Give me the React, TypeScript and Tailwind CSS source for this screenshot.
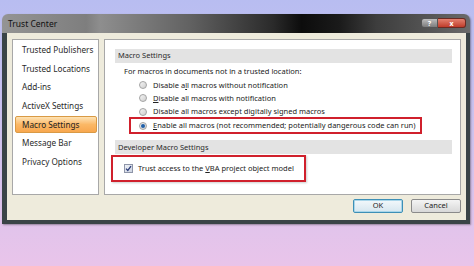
import React from 'react';

const navItems = [
  'Trusted Publishers',
  'Trusted Locations',
  'Add-ins',
  'ActiveX Settings',
  'Macro Settings',
  'Message Bar',
  'Privacy Options',
];

const Radio = ({ checked = false }: { checked?: boolean }) => (
  <span className="w-[8px] h-[8px] rounded-full border border-[#a3a3a3] bg-gradient-to-br from-[#f4f4f4] to-[#cfcfcf] flex items-center justify-center shrink-0">
    {checked && <span className="w-[4px] h-[4px] rounded-full bg-[#1f5fa8]" />}
  </span>
);

const SectionHeader = ({ title }: { title: string }) => (
  <div className="h-[13.5px] bg-[#e3e3e3] flex items-center pl-[3px] text-[7.5px] text-[#2a2a2a]">
    {title}
  </div>
);

export default function App() {
  return (
    <div
      className="w-[474px] h-[266px] overflow-hidden bg-gradient-to-b from-[#b8bdf1] via-[#cfc3ee] to-[#e9c4ea] pt-[14px] pl-[2px]"
      style={{ fontFamily: '"Noto Sans", "Open Sans", sans-serif' }}
    >
      <div className="w-[468px] h-[210px] flex flex-col rounded-t-[6px] overflow-hidden shadow-[1px_1px_2px_rgba(0,0,0,0.35)]">
        {/* title bar */}
        <div className="h-[19px] shrink-0 flex items-start bg-[linear-gradient(90deg,#949494_0%,#7e7e7e_18%,#8e8e8e_21%,#626262_40%,#2a2a2a_58%,#0c0c0c_64%,#1a1a1a_72%,#3d3d3d_80%,#575757_92%,#6a6a6a_100%)]">
          <span className="pl-[6px] pt-[4px] text-[8.5px] leading-[11px] text-[#111]">Trust Center</span>
          <div className="ml-auto mr-[4px] mt-[4px] flex">
            <div className="w-[17px] h-[10px] rounded-l-[3px] border border-[#555] bg-gradient-to-b from-[#bdbdbd] to-[#7d7d7d] flex items-center justify-center text-[7px] leading-none font-bold text-white">
              ?
            </div>
            <div className="w-[28px] h-[10px] rounded-r-[3px] border border-l-0 border-[#6b2a22] bg-gradient-to-b from-[#e3806f] to-[#bf3b2a] flex items-center justify-center text-[7px] leading-none font-bold text-white">
              x
            </div>
          </div>
        </div>

        {/* client area */}
        <div className="flex-1 flex flex-col border-l-[5px] border-r-[4px] border-b-[4px] border-[#3a4447] bg-[#eeebdc] px-[5px] pt-[6px]">
          <div className="flex gap-[5px] h-[156px]">
            {/* nav */}
            <div className="w-[87px] bg-white border border-[#a8a8a8] flex flex-col gap-[1.7px] pt-[1.5px] pl-[2px] pr-[1px]">
              {navItems.map((item) => (
                <div
                  key={item}
                  className={
                    item === 'Macro Settings'
                      ? 'h-[17px] flex items-center pl-[6px] text-[8.2px] text-[#222] border border-[#d99a45] rounded-[2px] bg-gradient-to-b from-[#fde3b4] via-[#fbb866] to-[#f8a74e]'
                      : 'h-[17px] flex items-center pl-[7px] text-[8.2px] text-[#2a2a2a]'
                  }
                >
                  {item}
                </div>
              ))}
            </div>

            {/* content */}
            <div className="flex-1 bg-white border border-[#a8a8a8] pl-[10px] pr-[8px] pt-[9px] flex flex-col">
              <SectionHeader title="Macro Settings" />
              <div className="mt-[3px] h-[13px] flex items-center pl-[9px] text-[7.5px] text-[#222]">
                For macros in documents not in a trusted location:
              </div>
              <div className="flex flex-col text-[7.5px] text-[#222]">
                <div className="h-[13.3px] flex items-center gap-[6px] pl-[24px]">
                  <Radio />
                  <span>
                    Disable a<span className="underline">l</span>l macros without notification
                  </span>
                </div>
                <div className="h-[13.3px] flex items-center gap-[6px] pl-[24px]">
                  <Radio />
                  <span>
                    <span className="underline">D</span>isable all macros with notification
                  </span>
                </div>
                <div className="h-[13.3px] flex items-center gap-[6px] pl-[24px]">
                  <Radio />
                  <span>
                    Disable all macros except di<span className="underline">g</span>itally signed macros
                  </span>
                </div>
                <div className="-mt-[1px] ml-[14px] w-[293px] h-[17px] border-2 border-[#d0202c] flex items-center gap-[6px] pl-[8px]">
                  <Radio checked />
                  <span className="whitespace-nowrap">
                    <span className="underline">E</span>nable all macros (not recommended; potentially dangerous code can run)
                  </span>
                </div>
              </div>

              <div className="mt-[6px]">
                <SectionHeader title="Developer Macro Settings" />
              </div>
              <div className="mt-[1px] -ml-[4px] w-[195px] h-[27px] border-2 border-[#d0202c] shadow-[1px_1px_2px_rgba(0,0,0,0.2)] flex items-center gap-[5px] pl-[11px] text-[7.5px] text-[#222]">
                <span className="w-[9px] h-[9px] border border-[#8e95a8] bg-gradient-to-br from-[#eef1f7] to-[#cdd4e2] flex items-center justify-center shrink-0">
                  <svg width="7" height="7" viewBox="0 0 7 7">
                    <path d="M1 3.6 L2.8 5.4 L6 1.2" fill="none" stroke="#2b3c78" strokeWidth="1.3" />
                  </svg>
                </span>
                <span className="whitespace-nowrap">
                  Trust access to the <span className="underline">V</span>BA project object model
                </span>
              </div>
            </div>
          </div>

          {/* buttons */}
          <div className="mt-[4px] flex justify-end gap-[8px]">
            <button className="w-[50px] h-[14px] rounded-[2px] border border-[#3d8fb6] bg-gradient-to-b from-[#f3f8fb] to-[#d6e6ef] shadow-[inset_0_0_0_1px_#a9d6ea] text-[7.5px] leading-none text-[#222] flex items-center justify-center">
              OK
            </button>
            <button className="w-[50px] h-[14px] rounded-[2px] border border-[#8a8a8a] bg-gradient-to-b from-[#f4f4f4] to-[#d8d8d8] text-[7.5px] leading-none text-[#222] flex items-center justify-center">
              Cancel
            </button>
          </div>
        </div>
      </div>
    </div>
  );
}
